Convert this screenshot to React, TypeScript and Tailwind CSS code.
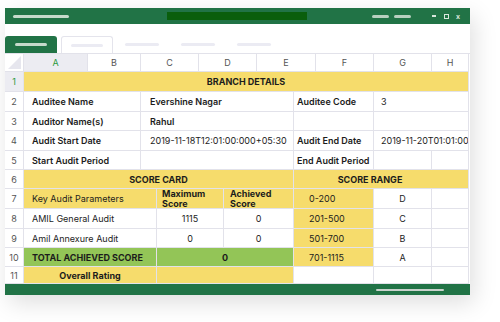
import type { ReactNode } from "react";

type CellProps = {
  w: number;
  children?: ReactNode;
  className?: string;
};

// fixed-width cell of the sheet, widths taken from the picture
function Cell({ w, children, className = "" }: CellProps) {
  return (
    <div
      style={{ width: w }}
      className={`h-full shrink-0 flex items-center border-r border-b border-[#e2e2ea] overflow-hidden whitespace-nowrap ${className}`}
    >
      {children}
    </div>
  );
}

function RowHead({ n, active }: { n: number; active?: boolean }) {
  return (
    <div
      className={`w-[19px] h-full shrink-0 flex items-center justify-center border-r border-b border-[#e2e2ea] text-[9px] ${
        active ? "bg-[#ececf2] text-[#2b9a3c]" : "bg-white text-[#555]"
      }`}
    >
      {n}
    </div>
  );
}

const yellow = "bg-[#f6dc6c]";
const green = "bg-[#93c557]";

export default function App() {
  const cols = [
    { l: "A", w: 64 },
    { l: "B", w: 53 },
    { l: "C", w: 58 },
    { l: "D", w: 58 },
    { l: "E", w: 59 },
    { l: "F", w: 58 },
    { l: "G", w: 58 },
    { l: "H", w: 37 },
  ];

  return (
    <div className="w-[500px] h-[322px] bg-white pl-[5px] pt-[8px] font-['Inter',sans-serif] text-[#1c1c1c]">
      <div className="w-[465px] h-[287px] flex flex-col bg-white shadow-[4px_8px_22px_rgba(0,0,0,0.13)]">
        {/* title bar */}
        <div className="h-[16px] shrink-0 bg-[#217346] flex items-center pl-[8px] pr-[10px]">
          <div className="w-[56px] h-[3px] rounded-full bg-[#c6dacb]" />
          <div className="ml-[98px] w-[140px] h-[8px] bg-[#0a5e0c]" />
          <div className="ml-auto w-[17px] h-[3px] rounded-full bg-[#b8cfbf]" />
          <div className="ml-[5px] w-[17px] h-[3px] rounded-full bg-[#b8cfbf]" />
          <div className="ml-[21px] w-[4px] h-[1.5px] bg-[#d8e6dc]" />
          <div className="ml-[8px] w-[5px] h-[5px] border-[1.5px] border-[#d8e6dc]" />
          <div className="ml-[7px] text-[7px] leading-none font-bold text-[#d8e6dc]">x</div>
        </div>

        {/* tabs */}
        <div className="h-[29px] shrink-0 flex items-end">
          <div className="w-[52px] h-[17px] rounded-t-[3px] bg-[#217346] flex items-center justify-center">
            <div className="w-[32px] h-[3px] rounded-full bg-[#c6dacb]" />
          </div>
          <div className="ml-[4px] w-[52px] h-[17px] rounded-t-[3px] border border-b-0 border-[#e4e4ec] bg-white flex items-center justify-center">
            <div className="w-[32px] h-[3px] rounded-full bg-[#ebebf3]" />
          </div>
          <div className="ml-[12px] mb-[7px] w-[34px] h-[3px] rounded-full bg-[#ebebf3]" />
          <div className="ml-[22px] mb-[7px] w-[34px] h-[3px] rounded-full bg-[#ebebf3]" />
          <div className="ml-[22px] mb-[7px] w-[34px] h-[3px] rounded-full bg-[#ebebf3]" />
        </div>

        {/* column header */}
        <div className="h-[19px] shrink-0 flex border-t border-[#e2e2ea]">
          <div className="w-[19px] h-full shrink-0 border-r border-b border-[#e2e2ea] bg-white flex items-end justify-end p-[2px]">
            <div className="w-0 h-0 border-l-[13px] border-l-transparent border-b-[13px] border-b-[#e6e6ee]" />
          </div>
          {cols.map((c, i) => (
            <Cell
              key={c.l}
              w={c.w}
              className={`justify-center text-[9px] ${
                i === 0 ? "bg-[#ececf2] text-[#2b9a3c]" : "text-[#555]"
              }`}
            >
              {c.l}
            </Cell>
          ))}
        </div>

        {/* sheet body */}
        <div className="flex-1 flex flex-col text-[9px] leading-none">
          <div className="h-[20px] flex">
            <RowHead n={1} active />
            <Cell w={445} className={`${yellow} justify-center font-bold`}>
              BRANCH DETAILS
            </Cell>
          </div>

          <div className="h-[20px] flex">
            <RowHead n={2} />
            <Cell w={117} className="pl-[8px] font-semibold">Auditee Name</Cell>
            <Cell w={153} className="pl-[9px] font-semibold">Evershine Nagar</Cell>
            <Cell w={80} className="pl-[3px] font-semibold">Auditee Code</Cell>
            <Cell w={95} className="pl-[7px]">3</Cell>
          </div>

          <div className="h-[19px] flex">
            <RowHead n={3} />
            <Cell w={117} className="pl-[8px] font-semibold">Auditor Name(s)</Cell>
            <Cell w={153} className="pl-[9px] font-semibold">Rahul</Cell>
            <Cell w={80} />
            <Cell w={95} />
          </div>

          <div className="h-[20px] flex">
            <RowHead n={4} />
            <Cell w={117} className="pl-[8px] font-semibold">Audit Start Date</Cell>
            <Cell w={153} className="pl-[9px]">2019-11-18T12:01:00:000+05:30</Cell>
            <Cell w={80} className="pl-[3px] font-semibold">Audit End Date</Cell>
            <Cell w={95} className="pl-[7px]">2019-11-20T01:01:00.</Cell>
          </div>

          <div className="h-[19px] flex">
            <RowHead n={5} />
            <Cell w={117} className="pl-[8px] font-semibold">Start Audit Period</Cell>
            <Cell w={153} />
            <Cell w={80} className="pl-[3px] font-semibold">End Audit Period</Cell>
            <Cell w={58} />
            <Cell w={37} />
          </div>

          <div className="h-[19px] flex">
            <RowHead n={6} />
            <Cell w={270} className={`${yellow} justify-center font-bold`}>SCORE CARD</Cell>
            <Cell w={175} className={`${yellow} justify-center pr-[22px] font-bold`}>
              SCORE RANGE
            </Cell>
          </div>

          <div className="h-[20px] flex">
            <RowHead n={7} />
            <Cell w={133} className={`${yellow} pl-[8px]`}>Key Audit Parameters</Cell>
            <Cell w={67} className={`${yellow} pl-[5px] font-bold`}>
              <span className="whitespace-normal leading-[10px]">Maximum<br />Score</span>
            </Cell>
            <Cell w={70} className={`${yellow} pl-[6px] font-bold`}>
              <span className="whitespace-normal leading-[10px]">Achieved<br />Score</span>
            </Cell>
            <Cell w={80} className={`${yellow} pl-[15px]`}>0-200</Cell>
            <Cell w={58} className="justify-center">D</Cell>
            <Cell w={37} />
          </div>

          <div className="h-[20px] flex">
            <RowHead n={8} />
            <Cell w={133} className="pl-[8px]">AMIL General Audit</Cell>
            <Cell w={67} className="justify-center">1115</Cell>
            <Cell w={70} className="justify-center">0</Cell>
            <Cell w={80} className={`${yellow} pl-[15px]`}>201-500</Cell>
            <Cell w={58} className="justify-center">C</Cell>
            <Cell w={37} />
          </div>

          <div className="h-[19px] flex">
            <RowHead n={9} />
            <Cell w={133} className="pl-[8px]">Amil Annexure Audit</Cell>
            <Cell w={67} className="justify-center">0</Cell>
            <Cell w={70} className="justify-center">0</Cell>
            <Cell w={80} className={`${yellow} pl-[15px]`}>501-700</Cell>
            <Cell w={58} className="justify-center">B</Cell>
            <Cell w={37} />
          </div>

          <div className="h-[19px] flex">
            <RowHead n={10} />
            <Cell w={133} className={`${green} pl-[8px] font-bold`}>TOTAL ACHIEVED SCORE</Cell>
            <Cell w={137} className={`${green} justify-center font-bold`}>0</Cell>
            <Cell w={80} className={`${yellow} pl-[15px]`}>701-1115</Cell>
            <Cell w={58} className="justify-center">A</Cell>
            <Cell w={37} />
          </div>

          <div className="flex-1 flex">
            <RowHead n={11} />
            <Cell w={133} className={`${yellow} justify-center font-bold`}>Overall Rating</Cell>
            <Cell w={137} className={yellow} />
            <Cell w={80} />
            <Cell w={58} />
            <Cell w={37} />
          </div>
        </div>

        {/* bottom bar */}
        <div className="h-[11px] shrink-0 bg-[#217346] flex items-center">
          <div className="ml-[371px] w-[68px] h-[2px] rounded-full bg-[#c9d2cc]" />
        </div>
      </div>
    </div>
  );
}
